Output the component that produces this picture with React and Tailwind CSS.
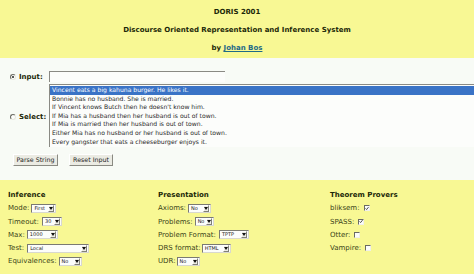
import React from "react";

const font = { fontFamily: '"DejaVu Sans", Verdana, sans-serif' };

function Sel({ text, w }) {
  return (
    <div
      className="flex items-center h-[9px] bg-[#fcfdfb] border border-t-[#7a7a72] border-l-[#7a7a72] border-r-[#d8d8d0] border-b-[#d8d8d0]"
      style={{ width: w }}
    >
      <span className="flex-1 pl-[2px] text-[5px] leading-[7px] text-[#202020] overflow-hidden whitespace-nowrap">{text}</span>
      <span className="w-[6px] h-[7px] mr-[1px] flex items-center justify-center bg-[#ecece4] border border-t-[#ffffff] border-l-[#ffffff] border-r-[#808078] border-b-[#808078]">
        <svg width="4" height="3" viewBox="0 0 4 3"><path d="M0 0 L4 0 L2 3 Z" fill="#111" /></svg>
      </span>
    </div>
  );
}

function Check({ on }) {
  return (
    <span className="w-[6px] h-[6px] flex items-center justify-center bg-[#fcfdfb] border border-t-[#6a6a62] border-l-[#6a6a62] border-r-[#f0f0ea] border-b-[#f0f0ea]">
      {on && (
        <svg width="5" height="5" viewBox="0 0 5 5"><path d="M0.7 2.4 L2 3.8 L4.4 0.8" fill="none" stroke="#222" strokeWidth="1" /></svg>
      )}
    </span>
  );
}

function Radio({ on }) {
  return (
    <span className="w-[6px] h-[6px] rounded-full flex items-center justify-center bg-[#fcfdfb] border border-t-[#6a6a62] border-l-[#6a6a62] border-r-[#e8e8e0] border-b-[#e8e8e0]">
      {on && <span className="w-[2px] h-[2px] rounded-full bg-[#222]" />}
    </span>
  );
}

const Row = ({ children, gap = "gap-[2px]" }) => (
  <div className={`flex items-center h-[13.3px] ${gap} text-[7px] leading-[8px] text-[#3a4418]`}>{children}</div>
);

const items = [
  "Vincent eats a big kahuna burger. He likes it.",
  "Bonnie has no husband. She is married.",
  "If Vincent knows Butch then he doesn't know him.",
  "If Mia has a husband then her husband is out of town.",
  "If Mia is married then her husband is out of town.",
  "Either Mia has no husband or her husband is out of town.",
  "Every gangster that eats a cheeseburger enjoys it.",
];

export default function App() {
  return (
    <div className="w-[474px] h-[274px] overflow-hidden flex flex-col" style={font}>
      <div className="h-[58px] bg-[#f8f894] flex flex-col items-center pt-[8px] gap-[10px] text-[7px] leading-[8px] font-bold text-[#1c2808]">
        <div>DORIS 2001</div>
        <div>Discourse Oriented Representation and Inference System</div>
        <div>
          by <span className="text-[#1f6a86] underline">Johan Bos</span>
        </div>
      </div>

      <div className="h-[122px] bg-[#f8fbf6] flex flex-col pt-[13px]">
        <div className="flex items-center h-[11px]">
          <div className="w-[49px] flex items-center pl-[10px] gap-[3px]">
            <Radio on />
            <span className="text-[7px] leading-[8px] font-bold text-[#1c2808]">Input:</span>
          </div>
          <div className="w-[176px] h-[11px] bg-[#fcfdfb] border-t border-l border-t-[#8a8a84] border-l-[#8a8a84]" />
        </div>
        <div className="flex items-center mt-[2px]">
          <div className="w-[49px] flex items-center pl-[10px] gap-[3px] pt-[3px]">
            <Radio />
            <span className="text-[7px] leading-[8px] font-bold text-[#1c2808]">Select:</span>
          </div>
          <div className="flex-1 h-[63px] bg-[#fcfdfb] border-t border-l border-t-[#8a8a84] border-l-[#8a8a84] pt-[1px]">
            {items.map((t, i) => (
              <div
                key={i}
                className={`h-[8.6px] pl-[2px] text-[6.1px] leading-[8.6px] whitespace-nowrap ${
                  i === 0 ? "bg-[#3a73c6] text-white" : "text-[#282828]"
                }`}
              >
                {t}
              </div>
            ))}
          </div>
        </div>
        <div className="flex mt-[7px] pl-[13px] gap-[11px]">
          {[
            ["Parse String", "w-[45px]"],
            ["Reset Input", "w-[44px]"],
          ].map(([t, w]) => (
            <div
              key={t}
              className={`${w} h-[12px] flex items-center justify-center bg-[#ebebe3] border border-t-[#ffffff] border-l-[#ffffff] border-r-[#8a8a82] border-b-[#8a8a82] text-[6.3px] leading-[8px] text-[#222] whitespace-nowrap`}
            >
              {t}
            </div>
          ))}
        </div>
      </div>

      <div className="flex-1 bg-[#f8f894] flex pt-[8.3px]">
        <div className="w-[158px] pl-[8px] flex flex-col">
          <Row><span className="font-bold text-[#1c2808]">Inference</span></Row>
          <Row><span>Mode:</span><Sel text="First" w={25} /></Row>
          <Row gap="gap-[3px]"><span>Timeout:</span><Sel text="30" w={20} /></Row>
          <Row><span>Max:</span><Sel text="1000" w={31} /></Row>
          <Row gap="gap-[3px]"><span>Test:</span><Sel text="Local" w={62} /></Row>
          <Row><span>Equivalences:</span><Sel text="No" w={23} /></Row>
        </div>
        <div className="w-[172px] flex flex-col">
          <Row><span className="font-bold text-[#1c2808]">Presentation</span></Row>
          <Row><span>Axioms:</span><Sel text="No" w={23} /></Row>
          <Row><span>Problems:</span><Sel text="No" w={19} /></Row>
          <Row gap="gap-[3px]"><span>Problem Format:</span><Sel text="TPTP" w={30} /></Row>
          <Row gap="gap-[1px]"><span>DRS format:</span><Sel text="HTML" w={29} /></Row>
          <Row gap="gap-[1px]"><span>UDR:</span><Sel text="No" w={23} /></Row>
        </div>
        <div className="flex-1 flex flex-col">
          <Row><span className="font-bold text-[#1c2808]">Theorem Provers</span></Row>
          <Row gap="gap-[4px]"><span>bliksem:</span><Check on /></Row>
          <Row gap="gap-[4px]"><span>SPASS:</span><Check on /></Row>
          <Row gap="gap-[4px]"><span>Otter:</span><Check /></Row>
          <Row gap="gap-[4px]"><span>Vampire:</span><Check /></Row>
        </div>
      </div>
    </div>
  );
}
